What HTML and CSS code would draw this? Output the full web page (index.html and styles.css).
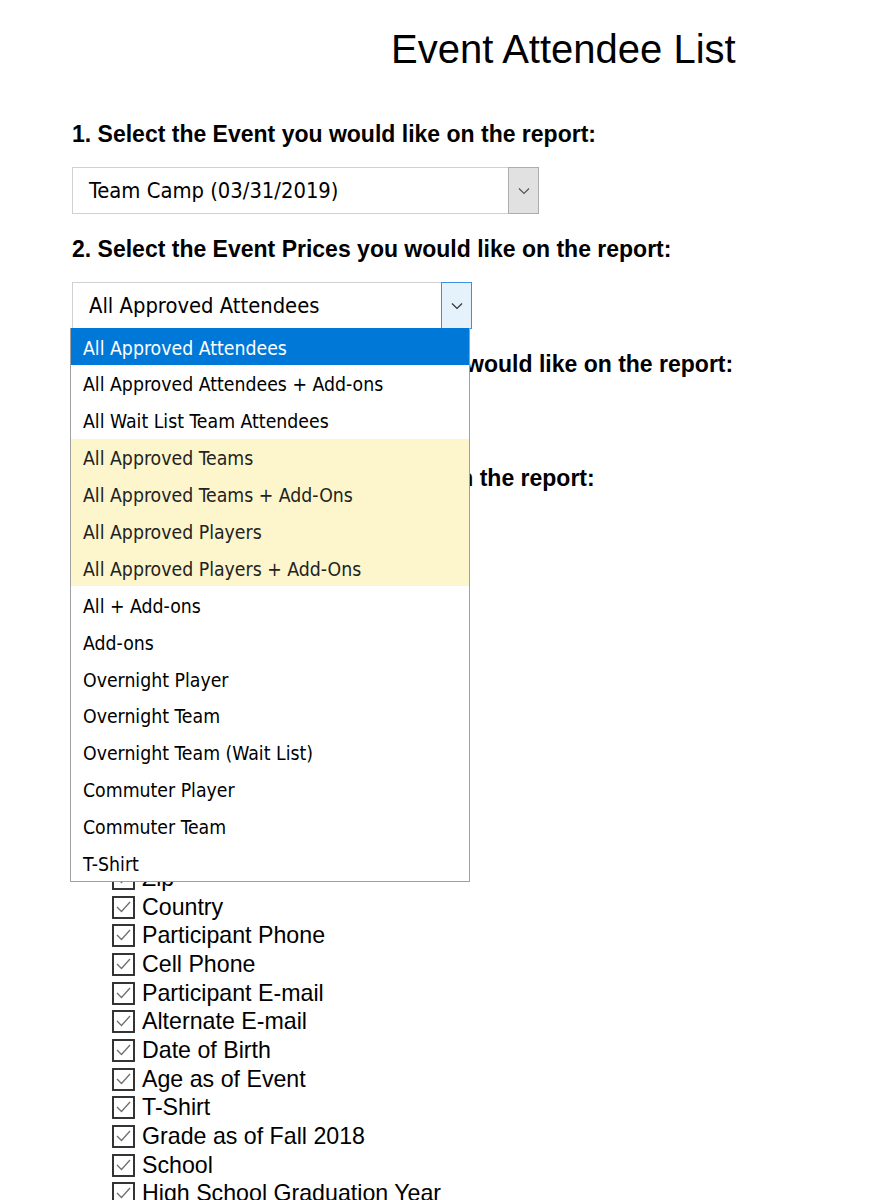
FILE: index.html
```html
<!DOCTYPE html>
<html>
<head>
<meta charset="utf-8">
<title>Event Attendee List</title>
<link rel="stylesheet" href="styles.css">
</head>
<body>
<div class="page">
  <h1 class="title">Event Attendee List</h1>

  <section class="step">
    <h2 class="step-title">1. Select the Event you would like on the report:</h2>
    <div class="select select-wide">
      <span class="select-value">Team Camp (03/31/2019)</span>
      <span class="select-btn"><svg width="12" height="8" viewBox="0 0 12 8"><polyline points="1,1.5 6,6.5 11,1.5" fill="none" stroke="#555" stroke-width="1.2"/></svg></span>
    </div>
  </section>

  <section class="step">
    <h2 class="step-title">2. Select the Event Prices you would like on the report:</h2>
    <div class="select select-narrow open">
      <span class="select-value">All Approved Attendees</span>
      <span class="select-btn"><svg width="12" height="8" viewBox="0 0 12 8"><polyline points="1,1.5 6,6.5 11,1.5" fill="none" stroke="#333" stroke-width="1.2"/></svg></span>
      <ul class="dropdown">
        <li class="opt selected">All Approved Attendees</li>
        <li class="opt">All Approved Attendees + Add-ons</li>
        <li class="opt">All Wait List Team Attendees</li>
        <li class="opt hl">All Approved Teams</li>
        <li class="opt hl">All Approved Teams + Add-Ons</li>
        <li class="opt hl">All Approved Players</li>
        <li class="opt hl">All Approved Players + Add-Ons</li>
        <li class="opt">All + Add-ons</li>
        <li class="opt">Add-ons</li>
        <li class="opt">Overnight Player</li>
        <li class="opt">Overnight Team</li>
        <li class="opt">Overnight Team (Wait List)</li>
        <li class="opt">Commuter Player</li>
        <li class="opt">Commuter Team</li>
        <li class="opt">T-Shirt</li>
      </ul>
    </div>
  </section>

  <section class="step">
    <h2 class="step-title">3. Select the Attendee Statuses you would like on the report:</h2>
    <div class="select select-short">
      <span class="select-value">All</span>
      <span class="select-btn"><svg width="12" height="8" viewBox="0 0 12 8"><polyline points="1,1.5 6,6.5 11,1.5" fill="none" stroke="#555" stroke-width="1.2"/></svg></span>
    </div>
  </section>

  <section class="step">
    <h2 class="step-title">4. Select the Columns to be listed on the report:</h2>
    <ul class="fields">
      <li class="field"><svg class="cb" width="23" height="23" viewBox="0 0 23 23"><rect x="1" y="1" width="21" height="21" fill="#fff" stroke="#2a2a2a" stroke-width="1.9"/><polyline points="5,11 9.5,15.5 18,6" fill="none" stroke="#6f6f6f" stroke-width="1.3"/></svg><span>First Name</span></li>
      <li class="field"><svg class="cb" width="23" height="23" viewBox="0 0 23 23"><rect x="1" y="1" width="21" height="21" fill="#fff" stroke="#2a2a2a" stroke-width="1.9"/><polyline points="5,11 9.5,15.5 18,6" fill="none" stroke="#6f6f6f" stroke-width="1.3"/></svg><span>Last Name</span></li>
      <li class="field"><svg class="cb" width="23" height="23" viewBox="0 0 23 23"><rect x="1" y="1" width="21" height="21" fill="#fff" stroke="#2a2a2a" stroke-width="1.9"/><polyline points="5,11 9.5,15.5 18,6" fill="none" stroke="#6f6f6f" stroke-width="1.3"/></svg><span>Team Name</span></li>
      <li class="field"><svg class="cb" width="23" height="23" viewBox="0 0 23 23"><rect x="1" y="1" width="21" height="21" fill="#fff" stroke="#2a2a2a" stroke-width="1.9"/><polyline points="5,11 9.5,15.5 18,6" fill="none" stroke="#6f6f6f" stroke-width="1.3"/></svg><span>Gender</span></li>
      <li class="field"><svg class="cb" width="23" height="23" viewBox="0 0 23 23"><rect x="1" y="1" width="21" height="21" fill="#fff" stroke="#2a2a2a" stroke-width="1.9"/><polyline points="5,11 9.5,15.5 18,6" fill="none" stroke="#6f6f6f" stroke-width="1.3"/></svg><span>Price Name</span></li>
      <li class="field"><svg class="cb" width="23" height="23" viewBox="0 0 23 23"><rect x="1" y="1" width="21" height="21" fill="#fff" stroke="#2a2a2a" stroke-width="1.9"/><polyline points="5,11 9.5,15.5 18,6" fill="none" stroke="#6f6f6f" stroke-width="1.3"/></svg><span>Registration Date</span></li>
      <li class="field"><svg class="cb" width="23" height="23" viewBox="0 0 23 23"><rect x="1" y="1" width="21" height="21" fill="#fff" stroke="#2a2a2a" stroke-width="1.9"/><polyline points="5,11 9.5,15.5 18,6" fill="none" stroke="#6f6f6f" stroke-width="1.3"/></svg><span>Amount Paid</span></li>
      <li class="field"><svg class="cb" width="23" height="23" viewBox="0 0 23 23"><rect x="1" y="1" width="21" height="21" fill="#fff" stroke="#2a2a2a" stroke-width="1.9"/><polyline points="5,11 9.5,15.5 18,6" fill="none" stroke="#6f6f6f" stroke-width="1.3"/></svg><span>Balance Due</span></li>
      <li class="field"><svg class="cb" width="23" height="23" viewBox="0 0 23 23"><rect x="1" y="1" width="21" height="21" fill="#fff" stroke="#2a2a2a" stroke-width="1.9"/><polyline points="5,11 9.5,15.5 18,6" fill="none" stroke="#6f6f6f" stroke-width="1.3"/></svg><span>Address</span></li>
      <li class="field"><svg class="cb" width="23" height="23" viewBox="0 0 23 23"><rect x="1" y="1" width="21" height="21" fill="#fff" stroke="#2a2a2a" stroke-width="1.9"/><polyline points="5,11 9.5,15.5 18,6" fill="none" stroke="#6f6f6f" stroke-width="1.3"/></svg><span>Address 2</span></li>
      <li class="field"><svg class="cb" width="23" height="23" viewBox="0 0 23 23"><rect x="1" y="1" width="21" height="21" fill="#fff" stroke="#2a2a2a" stroke-width="1.9"/><polyline points="5,11 9.5,15.5 18,6" fill="none" stroke="#6f6f6f" stroke-width="1.3"/></svg><span>City</span></li>
      <li class="field"><svg class="cb" width="23" height="23" viewBox="0 0 23 23"><rect x="1" y="1" width="21" height="21" fill="#fff" stroke="#2a2a2a" stroke-width="1.9"/><polyline points="5,11 9.5,15.5 18,6" fill="none" stroke="#6f6f6f" stroke-width="1.3"/></svg><span>State</span></li>
      <li class="field"><svg class="cb" width="23" height="23" viewBox="0 0 23 23"><rect x="1" y="1" width="21" height="21" fill="#fff" stroke="#2a2a2a" stroke-width="1.9"/><polyline points="5,11 9.5,15.5 18,6" fill="none" stroke="#6f6f6f" stroke-width="1.3"/></svg><span>Zip</span></li>
      <li class="field"><svg class="cb" width="23" height="23" viewBox="0 0 23 23"><rect x="1" y="1" width="21" height="21" fill="#fff" stroke="#2a2a2a" stroke-width="1.9"/><polyline points="5,11 9.5,15.5 18,6" fill="none" stroke="#6f6f6f" stroke-width="1.3"/></svg><span>Country</span></li>
      <li class="field"><svg class="cb" width="23" height="23" viewBox="0 0 23 23"><rect x="1" y="1" width="21" height="21" fill="#fff" stroke="#2a2a2a" stroke-width="1.9"/><polyline points="5,11 9.5,15.5 18,6" fill="none" stroke="#6f6f6f" stroke-width="1.3"/></svg><span>Participant Phone</span></li>
      <li class="field"><svg class="cb" width="23" height="23" viewBox="0 0 23 23"><rect x="1" y="1" width="21" height="21" fill="#fff" stroke="#2a2a2a" stroke-width="1.9"/><polyline points="5,11 9.5,15.5 18,6" fill="none" stroke="#6f6f6f" stroke-width="1.3"/></svg><span>Cell Phone</span></li>
      <li class="field"><svg class="cb" width="23" height="23" viewBox="0 0 23 23"><rect x="1" y="1" width="21" height="21" fill="#fff" stroke="#2a2a2a" stroke-width="1.9"/><polyline points="5,11 9.5,15.5 18,6" fill="none" stroke="#6f6f6f" stroke-width="1.3"/></svg><span>Participant E-mail</span></li>
      <li class="field"><svg class="cb" width="23" height="23" viewBox="0 0 23 23"><rect x="1" y="1" width="21" height="21" fill="#fff" stroke="#2a2a2a" stroke-width="1.9"/><polyline points="5,11 9.5,15.5 18,6" fill="none" stroke="#6f6f6f" stroke-width="1.3"/></svg><span>Alternate E-mail</span></li>
      <li class="field"><svg class="cb" width="23" height="23" viewBox="0 0 23 23"><rect x="1" y="1" width="21" height="21" fill="#fff" stroke="#2a2a2a" stroke-width="1.9"/><polyline points="5,11 9.5,15.5 18,6" fill="none" stroke="#6f6f6f" stroke-width="1.3"/></svg><span>Date of Birth</span></li>
      <li class="field"><svg class="cb" width="23" height="23" viewBox="0 0 23 23"><rect x="1" y="1" width="21" height="21" fill="#fff" stroke="#2a2a2a" stroke-width="1.9"/><polyline points="5,11 9.5,15.5 18,6" fill="none" stroke="#6f6f6f" stroke-width="1.3"/></svg><span>Age as of Event</span></li>
      <li class="field"><svg class="cb" width="23" height="23" viewBox="0 0 23 23"><rect x="1" y="1" width="21" height="21" fill="#fff" stroke="#2a2a2a" stroke-width="1.9"/><polyline points="5,11 9.5,15.5 18,6" fill="none" stroke="#6f6f6f" stroke-width="1.3"/></svg><span>T-Shirt</span></li>
      <li class="field"><svg class="cb" width="23" height="23" viewBox="0 0 23 23"><rect x="1" y="1" width="21" height="21" fill="#fff" stroke="#2a2a2a" stroke-width="1.9"/><polyline points="5,11 9.5,15.5 18,6" fill="none" stroke="#6f6f6f" stroke-width="1.3"/></svg><span>Grade as of Fall 2018</span></li>
      <li class="field"><svg class="cb" width="23" height="23" viewBox="0 0 23 23"><rect x="1" y="1" width="21" height="21" fill="#fff" stroke="#2a2a2a" stroke-width="1.9"/><polyline points="5,11 9.5,15.5 18,6" fill="none" stroke="#6f6f6f" stroke-width="1.3"/></svg><span>School</span></li>
      <li class="field"><svg class="cb" width="23" height="23" viewBox="0 0 23 23"><rect x="1" y="1" width="21" height="21" fill="#fff" stroke="#2a2a2a" stroke-width="1.9"/><polyline points="5,11 9.5,15.5 18,6" fill="none" stroke="#6f6f6f" stroke-width="1.3"/></svg><span>High School Graduation Year</span></li>
      <li class="field"><svg class="cb" width="23" height="23" viewBox="0 0 23 23"><rect x="1" y="1" width="21" height="21" fill="#fff" stroke="#2a2a2a" stroke-width="1.9"/><polyline points="5,11 9.5,15.5 18,6" fill="none" stroke="#6f6f6f" stroke-width="1.3"/></svg><span>Notes</span></li>
    </ul>
  </section>
</div>
</body>
</html>
```

FILE: styles.css
```css
html, body {
  margin: 0;
  padding: 0;
  background: #fff;
}

body {
  font-family: "Liberation Sans", Arial, sans-serif;
  color: #000;
}

.page {
  padding-left: 72px;
  overflow: hidden;
  height: 1200px;
}

.title {
  margin: 26px 0 0 319px;
  font-size: 40px;
  font-weight: normal;
  line-height: 46px;
  white-space: nowrap;
}

.step {
  margin-top: 21.6px;
}

.title + .step {
  margin-top: 49px;
}

.step-title {
  margin: 0;
  font-size: 23px;
  font-weight: bold;
  line-height: 26.4px;
  white-space: nowrap;
}

.select {
  position: relative;
  margin-top: 19.8px;
  height: 47px;
  box-sizing: border-box;
  border: 1px solid #d0d0d0;
  display: flex;
  align-items: center;
  font-family: "DejaVu Sans Condensed", "DejaVu Sans", sans-serif;
  font-stretch: condensed;
  font-size: 21.8px;
}

.select-wide {
  width: 467px;
}

.select-narrow {
  width: 400px;
}

.select-short {
  width: 380px;
}

.select-value {
  flex: 1;
  padding-left: 16px;
}

.select-btn {
  align-self: stretch;
  width: 29px;
  margin: -1px -1px -1px 0;
  background: #e1e1e1;
  border: 1px solid #adadad;
  display: flex;
  align-items: center;
  justify-content: center;
}

.open .select-btn {
  background: #e5f1fb;
  border-color: #3d8fe0;
}

.dropdown {
  position: absolute;
  left: -3px;
  top: 45px;
  width: 400px;
  box-sizing: border-box;
  margin: 0;
  padding: 0;
  list-style: none;
  background: #fff;
  border: 1px solid #a0a0a0;
  border-top: none;
  font-size: 19.3px;
  z-index: 2;
}

.opt {
  box-sizing: border-box;
  height: 36.9px;
  line-height: 36.9px;
  padding: 2.5px 0 0 12px;
  white-space: nowrap;
}

.opt.selected {
  background: #0078d7;
  color: #fff;
}

.opt.hl {
  background: #fdf6cd;
  color: #222;
}

.fields {
  list-style: none;
  margin: 28px 0 0 0;
  padding: 0 0 0 40px;
}

.field {
  display: flex;
  align-items: center;
  height: 28.7px;
  font-size: 23.2px;
  white-space: nowrap;
}

.cb {
  flex: none;
  margin-right: 7px;
}
```
